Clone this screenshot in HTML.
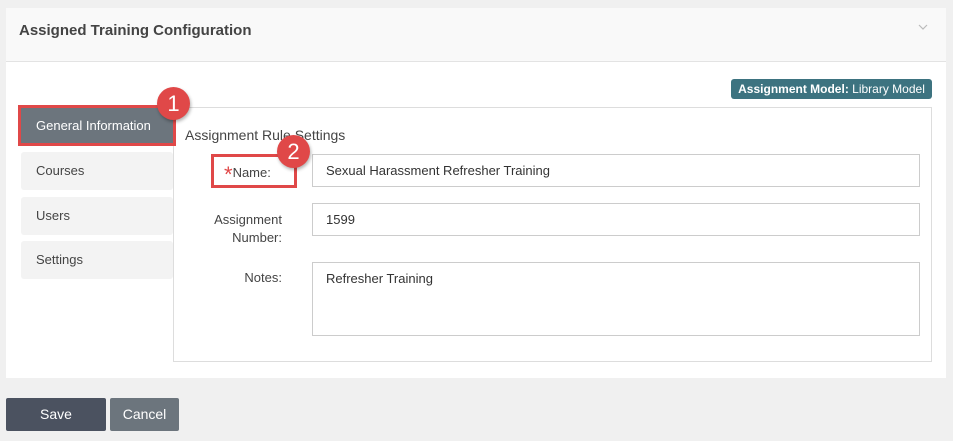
<!DOCTYPE html>
<html><head><style>
*{box-sizing:border-box;margin:0;padding:0}
body{width:953px;height:441px;background:#f0f0f0;font-family:"Liberation Sans",sans-serif;position:relative;overflow:hidden;color:#333}
.abs{position:absolute}
.panel{left:6px;top:8px;width:940px;height:370px;background:#fff}
.hdr{left:6px;top:8px;width:940px;height:54px;background:#f9f9f9;border-bottom:1px solid #e3e3e3;font-size:15px;font-weight:bold;color:#444;padding:14px 13px}
.badge{left:731px;top:79px;width:201px;height:20px;background:#3d7380;color:#fff;font-size:12px;font-weight:bold;border-radius:3px;text-align:center;line-height:20px}
.box{left:173px;top:107px;width:759px;height:255px;border:1px solid #ddd;background:#fff}
.tab{left:21px;width:152px;height:38px;background:#f3f3f3;border-radius:3px;font-size:13px;color:#444;padding-left:15px;line-height:38px}
.gen{left:18px;top:105px;width:158px;height:41px;background:#6c757d;color:#fff;border:3px solid #e04848;font-size:13px;padding-left:15px;line-height:35px}
.inp{left:312px;width:608px;border:1px solid #ccc;background:#fff;font-size:13px;padding-left:13px}
.lbl{font-size:13px;color:#444;text-align:right;width:120px;left:162px}
.circ{width:33px;height:33px;border-radius:50%;background:#e04848;color:#fff;font-size:22px;text-align:center;line-height:33px;box-shadow:1px 2px 3px rgba(0,0,0,.3)}
.btn{top:398px;height:33px;color:#fff;font-size:14px;text-align:center;line-height:33px;border-radius:2px}
</style></head><body>
<div class="abs panel"></div>
<div class="abs hdr">Assigned Training Configuration</div>
<svg class="abs" style="left:918px;top:24px" width="10" height="6"><path d="M1 1L5 5L9 1" stroke="#bbb" fill="none" stroke-width="1.2"/></svg>
<div class="abs badge">Assignment Model: <span style="font-weight:normal">Library Model</span></div>
<div class="abs box"></div>
<div class="abs gen">General Information</div>
<div class="abs tab" style="top:152px">Courses</div>
<div class="abs tab" style="top:197px">Users</div>
<div class="abs tab" style="top:241px">Settings</div>
<div class="abs" style="left:185px;top:127px;font-size:14px;color:#444">Assignment Rule Settings</div>
<div class="abs" style="left:211px;top:154px;width:86px;height:34px;border:3px solid #e04848;background:#fff"></div>
<div class="abs" style="left:224px;top:162px;font-size:13px;color:#444;white-space:nowrap"><span style="color:#e04848;font-size:22px;vertical-align:-5px">*</span>Name:</div>
<div class="abs inp" style="top:154px;height:33px;line-height:31px">Sexual Harassment Refresher Training</div>
<div class="abs lbl" style="top:211px;line-height:18px">Assignment<br>Number:</div>
<div class="abs inp" style="top:203px;height:33px;line-height:31px">1599</div>
<div class="abs lbl" style="top:270px">Notes:</div>
<div class="abs inp" style="top:262px;height:74px;padding-top:8px">Refresher Training</div>
<div class="abs circ" style="left:157px;top:87px">1</div>
<div class="abs circ" style="left:277px;top:135px">2</div>
<div class="abs btn" style="left:6px;width:100px;background:#4b5260">Save</div>
<div class="abs btn" style="left:110px;width:69px;background:#6c757d">Cancel</div>
</body></html>
